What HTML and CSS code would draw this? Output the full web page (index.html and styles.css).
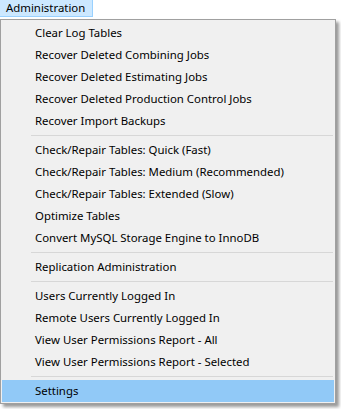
FILE: index.html
```html
<!DOCTYPE html>
<html>
<head>
<meta charset="utf-8">
<link rel="stylesheet" href="styles.css">
</head>
<body>
<div class="menubar">
  <div class="menubar-item">Administration</div>
</div>
<div class="menu">
  <div class="item">Clear Log Tables</div>
  <div class="item">Recover Deleted Combining Jobs</div>
  <div class="item">Recover Deleted Estimating Jobs</div>
  <div class="item">Recover Deleted Production Control Jobs</div>
  <div class="item">Recover Import Backups</div>
  <div class="sep"></div>
  <div class="item">Check/Repair Tables: Quick (Fast)</div>
  <div class="item">Check/Repair Tables: Medium (Recommended)</div>
  <div class="item">Check/Repair Tables: Extended (Slow)</div>
  <div class="item">Optimize Tables</div>
  <div class="item">Convert MySQL Storage Engine to InnoDB</div>
  <div class="sep"></div>
  <div class="item">Replication Administration</div>
  <div class="sep"></div>
  <div class="item">Users Currently Logged In</div>
  <div class="item">Remote Users Currently Logged In</div>
  <div class="item">View User Permissions Report - All</div>
  <div class="item">View User Permissions Report - Selected</div>
  <div class="sep"></div>
  <div class="item active">Settings</div>
</div>
</body>
</html>
```

FILE: styles.css
```css
html, body {
  margin: 0;
  padding: 0;
  background: #ffffff;
}
body {
  font-family: "Noto Sans", "Open Sans", sans-serif;
  font-size: 11.4px;
  color: #000;
  width: 341px;
  height: 409px;
  overflow: hidden;
}
.menubar {
  display: flex;
  height: 17px;
}
.menubar-item {
  box-sizing: border-box;
  width: 93px;
  height: 17px;
  padding: 0 0 0 6px;
  background: #cce8ff;
  border: 1px solid #99d1ff;
  border-left: none;
  border-top: none;
  line-height: 16px;
  white-space: nowrap;
}
.menu {
  box-sizing: border-box;
  margin-top: 2px;
  width: 336px;
  background: #f0f0f0;
  border: 1px solid #a0a0a0;
  padding: 2px 1px 1px 1px;
  display: flex;
  flex-direction: column;
  box-shadow: 3px 3px 3px rgba(0, 0, 0, 0.4);
}
.item {
  height: 22px;
  line-height: 22px;
  padding-left: 33px;
  white-space: nowrap;
}
.item.active {
  background: #91c9f7;
}
.sep {
  height: 7px;
  display: flex;
  align-items: center;
  padding-left: 29px;
  padding-right: 1px;
}
.sep::before {
  content: "";
  flex: 1;
  height: 1px;
  background: #d7d7d7;
}
```
